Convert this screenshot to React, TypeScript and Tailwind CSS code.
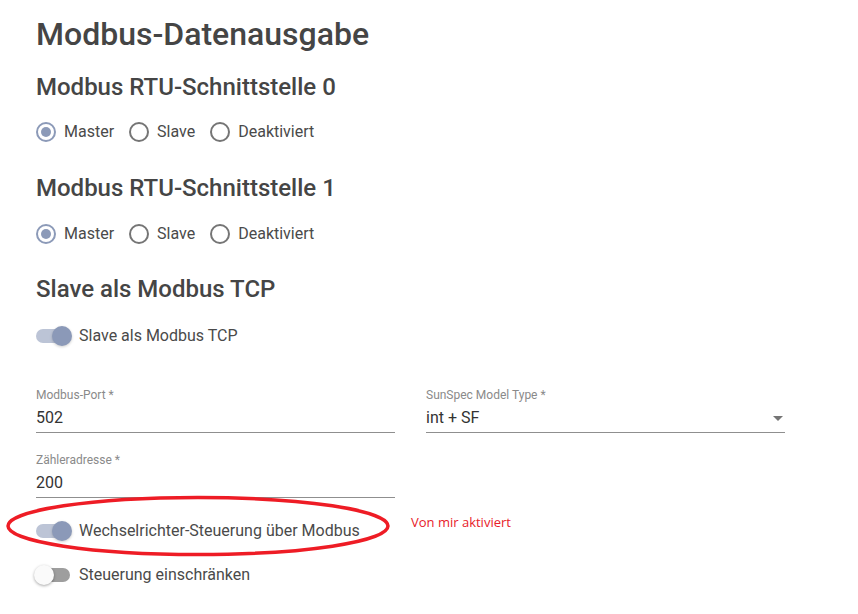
import { useState } from "react";

const FONT = { fontFamily: "Roboto, 'Liberation Sans', sans-serif" };

function Radio({ checked, label }: { checked: boolean; label: string }) {
  return (
    <label className="mr-[15px] flex items-center gap-2">
      <span
        className={`flex h-[20px] w-[20px] items-center justify-center rounded-full border-2 ${
          checked ? "border-[#8c9ab8]" : "border-[#757575]"
        }`}
      >
        {checked ? <span className="h-[10px] w-[10px] rounded-full bg-[#8c9ab8]" /> : null}
      </span>
      <span className="text-[16px] leading-6 text-[#4a4a4a]">{label}</span>
    </label>
  );
}

function RadioRow() {
  return (
    <div className="flex h-6 items-center">
      <Radio checked label="Master" />
      <Radio checked={false} label="Slave" />
      <Radio checked={false} label="Deaktiviert" />
    </div>
  );
}

function Toggle({ on, label }: { on: boolean; label: string }) {
  return (
    <div className="flex h-6 items-center gap-[9px]">
      <span className="relative flex h-[20px] w-[34px] items-center">
        <span
          className={`h-[14px] w-[34px] rounded-full ${on ? "bg-[#bcc4d6]" : "bg-[#9e9e9e]"}`}
        />
        <span
          className={`absolute top-0 h-[20px] w-[20px] rounded-full ${
            on
              ? "left-[16px] bg-[#8b99b8] shadow-[0_1px_3px_rgba(0,0,0,0.2)]"
              : "left-[-2px] bg-[#fafafa] shadow-[0_1px_3px_rgba(0,0,0,0.35)]"
          }`}
        />
      </span>
      <span className="text-[16px] leading-6 text-[#4a4a4a]">{label}</span>
    </div>
  );
}

function Field({ label, value, select }: { label: string; value: string; select?: boolean }) {
  return (
    <div className="w-[359px]">
      <div className="text-[12px] leading-4 text-[#8a8a8a]">{label}</div>
      <div className="mt-[3px] flex items-center justify-between border-b border-[#8f8f8f] pb-[2px]">
        <span className="text-[16px] leading-6 text-[#333]">{value}</span>
        {select ? (
          <svg width="24" height="24" viewBox="0 0 24 24" className="mr-[-5px]">
            <path d="M7 10l5 5 5-5z" fill="#757575" />
          </svg>
        ) : null}
      </div>
    </div>
  );
}

export default function App() {
  const [note] = useState("Von mir aktiviert");
  return (
    <div className="relative min-h-[614px] w-[858px] bg-white pl-[36px] pt-[15px]" style={FONT}>
      <h1 className="text-[32px] font-medium leading-[38px] text-[#454545]">Modbus-Datenausgabe</h1>

      <h2 className="mt-[19px] text-[24px] font-medium leading-[30px] text-[#454545]">
        Modbus RTU-Schnittstelle 0
      </h2>
      <div className="mt-[18px]">
        <RadioRow />
      </div>

      <h2 className="mt-[29px] text-[24px] font-medium leading-[30px] text-[#454545]">
        Modbus RTU-Schnittstelle 1
      </h2>
      <div className="mt-[19px]">
        <RadioRow />
      </div>

      <h2 className="mt-[28px] text-[24px] font-medium leading-[30px] text-[#454545]">
        Slave als Modbus TCP
      </h2>
      <div className="mt-[20px]">
        <Toggle on label="Slave als Modbus TCP" />
      </div>

      <div className="mt-[39px] flex gap-[31px]">
        <Field label="Modbus-Port *" value="502" />
        <Field label="SunSpec Model Type *" value="int + SF" select />
      </div>
      <div className="mt-[19px]">
        <Field label="Zähleradresse *" value="200" />
      </div>

      <div className="relative mt-[21px] flex items-center">
        <Toggle on label="Wechselrichter-Steuerung über Modbus" />
        <span
          className="absolute left-[375px] top-[-7px] text-[13px] leading-5 text-[#e8202a]"
          style={{ fontFamily: "'Open Sans', 'Noto Sans', sans-serif" }}
        >
          {note}
        </span>
        <svg
          className="pointer-events-none absolute left-[-31px] top-[-25px]"
          width="386"
          height="64"
          viewBox="0 0 386 64"
        >
          <ellipse cx="193" cy="32" rx="190" ry="28.5" fill="none" stroke="#ee1c25" strokeWidth="3.5" />
        </svg>
      </div>

      <div className="mt-[20px]">
        <Toggle on={false} label="Steuerung einschränken" />
      </div>
    </div>
  );
}
